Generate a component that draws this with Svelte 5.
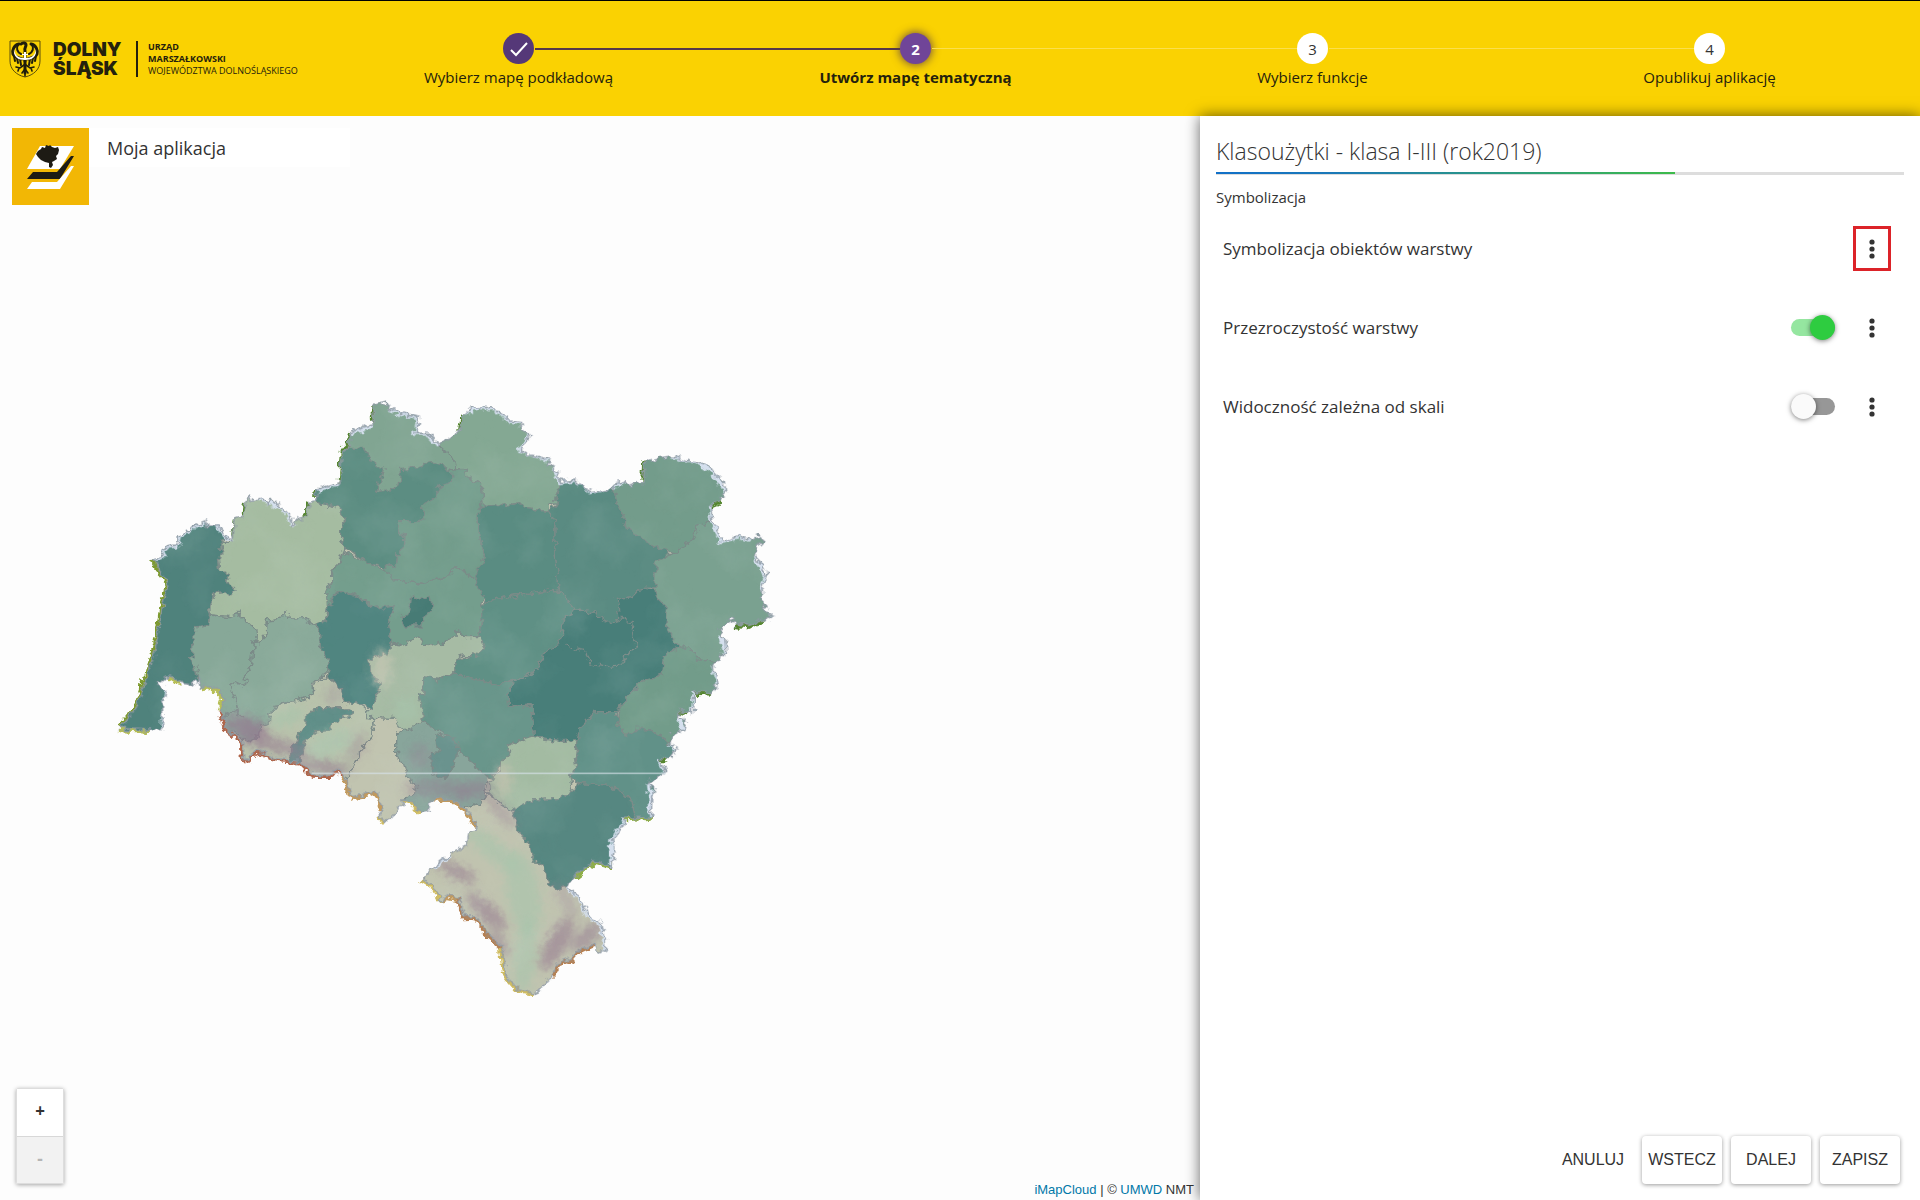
<script lang="ts">
    const steps = [
        { label: 'Wybierz mapę podkładową', state: 'done' },
        { label: 'Utwórz mapę tematyczną', state: 'active' },
        { label: 'Wybierz funkcje', state: 'todo' },
        { label: 'Opublikuj aplikację', state: 'todo' },
    ];

    let appName = $state('Moja aplikacja');
    let progress = $state(66.7);

    let options = $state([
        { id: 'symbols', label: 'Symbolizacja obiektów warstwy', toggle: false, on: false, marked: true },
        { id: 'opacity', label: 'Przezroczystość warstwy', toggle: true, on: true, marked: false },
        { id: 'scale', label: 'Widoczność zależna od skali', toggle: true, on: false, marked: false },
    ]);

    // granica województwa
    const border =
        'M60 1015L110 950 130 890 145 840 165 780 180 700 188 640 203 590 195 565 170 530 158 508 185 500 195 470 230 465 240 435 290 405 320 392 325 408 355 408 372 430 395 455 402 400 410 382 428 378 432 345 447 320 455 335 490 328 505 342 508 325 545 352 578 385 576 408 595 385 612 382 630 340 645 335 650 298 690 285 718 278 722 235 728 185 745 165 752 130 790 110 820 105 820 45 860 36 866 55 920 72 958 82 948 130 985 130 1012 155 1018 168 1040 148 1075 125 1080 110 1088 80 1115 52 1140 50 1198 60 1205 70 1225 92 1265 98 1268 120 1290 138 1278 155 1262 182 1290 195 1350 208 1345 225 1370 245 1382 275 1425 270 1445 290 1475 305 1535 295 1545 283 1575 275 1590 285 1630 280 1635 215 1680 203 1715 198 1765 212 1790 215 1830 232 1850 255 1870 275 1875 310 1858 335 1835 345 1838 395 1855 420 1865 455 1890 445 1915 437 1955 450 1975 435 1992 450 1975 465 1965 500 1985 520 2000 555 1985 590 1990 640 2003 670 2018 676 1990 690 1945 706 1905 702 1893 688 1860 715 1862 735 1875 745 1878 790 1850 812 1840 835 1855 883 1830 908 1785 905 1780 970 1740 962 1738 985 1758 995 1750 1020 1715 1035 1712 1060 1728 1080 1715 1100 1675 1105 1698 1145 1645 1180 1665 1195 1655 1220 1655 1280 1580 1285 1535 1355 1545 1370 1535 1430 1480 1415 1420 1460 1400 1492 1440 1520 1465 1580 1505 1600 1512 1630 1518 1675 1495 1688 1480 1662 1435 1682 1415 1705 1375 1720 1355 1760 1305 1810 1255 1800 1215 1755 1205 1670 1165 1635 1125 1580 1095 1582 1078 1525 1045 1518 1022 1532 1000 1488 968 1468 1000 1430 1050 1395 1100 1365 1108 1325 1132 1310 1110 1275 1070 1232 1000 1225 985 1258 960 1265 940 1240 912 1230 880 1275 855 1295 835 1278 848 1265 830 1205 755 1220 732 1155 710 1135 695 1155 640 1155 600 1115 520 1105 470 1080 432 1112 428 1055 375 1010 362 960 375 925 340 890 305 895 298 862 280 885 245 880 210 858 170 885 200 900 188 950 188 1018 150 1020Z';

    // powiaty; fragmenty poza granicą obcina clip-path
    const counties = [
        { fill: '#4f827c', d: 'M30 1040L100 480 320 370 395 440 360 460 368 490 358 500 362 540 380 548 385 580 410 607 345 610 330 650 325 705 290 710 275 770 275 800 298 862 290 900 230 1040Z' },
        { fill: '#a5bca1', d: 'M380 460L395 440 400 300 645 300 645 335 715 352 742 395 722 405 725 445 738 470 722 510 695 545 695 575 680 610 683 650 675 690 645 705 610 683 560 685 555 668 540 685 503 690 498 735 482 755 470 750 470 715 445 700 415 670 390 680 330 675 330 650 345 610 410 607 385 580 380 548 362 540 358 500 368 490 360 460Z' },
        { fill: '#87a898', d: 'M330 675L390 680 415 670 445 700 470 715 475 755 460 760 455 825 435 855 440 885 415 880 390 890 405 930 412 970 432 985 400 965 370 985 340 960 340 910 300 905 290 850 275 800 275 770 290 710 325 705Z' },
        { fill: '#8aaa9a', d: 'M482 755L498 735 503 690 540 685 555 668 560 685 610 683 645 705 662 730 665 775 688 820 680 850 635 880 642 915 600 930 535 940 510 970 505 1000 482 1010 475 1035 455 1052 428 1045 370 1010 370 985 400 965 432 985 412 970 405 930 390 890 415 880 440 885 435 855 455 825 460 760Z' },
        { fill: '#b9c3ac', d: 'M428 1045L455 1052 475 1035 482 1010 505 1000 510 970 535 940 600 930 642 915 640 885 680 860 715 885 735 940 770 935 800 960 800 982 820 985 815 1040 780 1080 755 1140 740 1170 400 1170Z' },
        { fill: '#5f8e88', d: 'M568 1130L572 1070 590 1060 600 1025 620 1000 612 985 640 960 680 955 700 950 728 950 760 965 755 982 730 980 695 1000 690 1022 650 1025 610 1060 612 1078 600 1125Z' },
        { fill: '#749e8d', d: 'M738 485L722 510 695 545 695 575 680 610 683 650 712 605 760 615 800 635 830 655 882 645 865 700 873 760 910 768 945 738 970 750 965 765 1000 768 1040 755 1070 725 1095 740 1140 740 1145 690 1150 600 1125 570 1095 545 1065 530 1040 560 970 580 880 568 848 535 800 520Z' },
        { fill: '#508580', d: 'M650 705L680 690 683 650 690 640 712 605 760 615 800 635 830 655 882 645 865 700 873 760 860 792 805 810 808 840 843 885 815 955 770 935 735 940 715 885 680 855 688 820 665 775 662 730Z' },
        { fill: '#a6bba4', d: 'M870 765L910 768 945 738 970 750 965 765 1000 768 1040 755 1070 725 1095 740 1140 740 1155 775 1125 800 1090 800 1065 810 1065 850 1020 868 975 865 972 910 955 915 970 970 970 1008 925 1020 895 1008 880 985 800 982 800 960 815 955 843 885 808 840 805 810 860 792Z' },
        { fill: '#477b75', d: 'M935 615L950 632 990 620 997 660 970 680 967 708 913 708 900 685 928 670Z' },
        { fill: '#81a592', d: 'M700 175L735 100 820 20 960 30 1018 168 1060 205 1068 240 985 240 905 260 900 290 860 305 832 305 790 200Z' },
        { fill: '#5c8d82', d: 'M640 300L690 260 710 175 790 175 810 205 825 210 828 230 852 232 832 305 860 300 900 285 905 235 965 228 985 215 1055 240 1055 278 1020 285 1005 325 965 345 972 375 960 395 900 395 895 410 912 440 910 475 895 485 890 520 860 530 800 520 738 470 722 445 722 405 742 395 715 352 645 335Z' },
        { fill: '#729c8b', d: 'M1055 240L1098 238 1100 260 1145 290 1150 345 1135 370 1135 430 1155 490 1125 570 1095 545 1065 530 1040 560 970 580 880 568 848 535 890 520 895 485 910 475 912 440 895 410 900 395 960 395 972 375 965 345 1005 325 1020 285 1055 278Z' },
        { fill: '#84a893', d: 'M1018 168L1060 60 1130 30 1400 150 1382 275 1365 330 1375 340 1350 345 1345 365 1272 355 1265 338 1220 345 1150 350 1145 290 1100 260 1098 238 1068 240 1060 205Z' },
        { fill: '#5a8c82', d: 'M1150 350L1220 345 1265 338 1272 355 1345 365 1365 395 1365 490 1378 600 1190 625 1160 638 1140 605 1125 570 1155 490 1135 430 1135 370Z' },
        { fill: '#5a8b82', d: 'M1382 275L1385 250 1535 280 1550 330 1570 385 1580 415 1650 455 1710 475 1705 495 1670 515 1668 590 1625 592 1600 620 1555 625 1560 690 1530 700 1470 665 1420 665 1378 600 1365 490 1365 395 1345 365 1375 340 1365 330Z' },
        { fill: '#739c8b', d: 'M1535 280L1620 180 1880 180 1890 340 1838 395 1800 405 1760 465 1725 490 1690 480 1650 460 1580 415 1570 385 1550 330Z' },
        { fill: '#7aa190', d: 'M1838 395L2050 400 2050 750 1880 820 1840 815 1790 805 1775 780 1715 770 1695 705 1695 650 1668 620 1668 515 1705 495 1725 490 1760 465 1800 405Z' },
        { fill: '#5f9085', d: 'M1160 638L1190 625 1378 600 1430 660 1400 690 1380 760 1340 800 1300 860 1240 870 1190 885 1065 850 1065 810 1125 800 1155 775 1140 740 1145 690 1145 640Z' },
        { fill: '#729c8a', d: 'M1840 815L1900 850 1800 1060 1712 1060 1650 1020 1610 1018 1580 1035 1550 1000 1555 965 1580 920 1630 870 1685 855 1690 800 1740 770 1775 780 1790 805Z' },
        { fill: '#487e79', d: 'M1430 660L1470 665 1530 700 1560 690 1552 625 1600 620 1625 592 1665 595 1670 625 1700 655 1695 700 1715 735 1740 770 1690 800 1685 855 1630 870 1580 920 1550 965 1490 965 1440 1015 1430 1055 1380 1055 1300 1040 1295 990 1300 945 1225 950 1225 915 1240 870 1300 850 1340 780 1380 760 1390 690Z' },
        { fill: '#69968b', d: 'M1020 868L1065 850 1190 885 1240 870 1225 915 1225 950 1300 945 1295 990 1300 1040 1225 1065 1230 1090 1205 1120 1180 1165 1160 1160 1130 1130 1070 1080 1040 1035 970 995 970 970 955 915 972 910 975 865Z' },
        { fill: '#a3bba2', d: 'M1225 1065L1300 1042 1380 1055 1428 1052 1425 1090 1430 1130 1410 1160 1420 1205 1380 1225 1300 1230 1240 1260 1215 1250 1170 1215 1165 1180 1205 1140 1205 1110 1235 1080Z' },
        { fill: '#619188', d: 'M1430 1055L1440 1015 1490 965 1550 965 1550 1000 1580 1035 1610 1018 1650 1020 1712 1060 1790 1100 1680 1310 1610 1310 1595 1225 1530 1190 1430 1180 1410 1160 1430 1130Z' },
        { fill: '#568781', d: 'M1420 1205L1430 1180 1530 1190 1595 1225 1610 1310 1560 1470 1400 1492 1370 1498 1350 1485 1330 1425 1300 1415 1290 1365 1255 1325 1235 1260 1300 1230 1380 1225Z' },
        { fill: '#88a59b', d: 'M890 1030L930 1015 970 995 1040 1035 1070 1080 1130 1130 1160 1160 1160 1210 1140 1240 1095 1252 1060 1300 900 1300 912 1230 955 1190 930 1175 910 1120 890 1100Z' },
        { fill: '#6a938e', d: 'M1010 1035L1065 1045 1075 1080 1065 1110 1045 1160 1020 1165 995 1145 992 1090 1015 1085Z' },
    ];

    const extraBorders = [
        'M800 982L820 985 815 1040 780 1080 755 1140',
        'M1400 762L1415 775 1450 780 1475 822 1515 830 1568 825 1575 795 1610 770 1595 740 1600 695 1560 690',
        'M1095 1252L1140 1240 1160 1210 1235 1260',
    ];

    // zachodni i południowy skraj widoczny spod warstwy
    const fringes = [
        { color: '#7d9a2e', d: 'M60 1015L110 950 130 890 145 840 165 780 180 700 188 640 203 590 195 565 170 530 158 508' },
        { color: '#b7bf55', d: 'M60 1015L150 1020M210 858L245 880M305 895L340 890 375 925 362 960' },
        { color: '#b0664a', d: 'M362 960L375 1010 428 1055 432 1112 470 1080 520 1105 600 1115 640 1155 695 1155 710 1135 732 1155' },
        { color: '#c39a5c', d: 'M732 1155L755 1220 830 1205 848 1265M1000 1225L1070 1232 1110 1275 1132 1310M1022 1532L1045 1518 1078 1525' },
        { color: '#d0bd62', d: 'M835 1278L855 1295M912 1230L940 1240 960 1265M968 1468L1000 1488 1022 1532M1205 1670L1215 1755 1255 1800 1305 1810' },
        { color: '#b58052', d: 'M1078 1525L1095 1582 1125 1580 1165 1635 1205 1670M1355 1760L1375 1720 1415 1705 1435 1682 1480 1662' },
        { color: '#55862f', d: 'M402 440L410 390M430 378L434 345M615 380L630 340M648 330L650 298M722 278L728 185 745 165 752 130M822 95L820 45M1080 120L1088 80M1633 280L1635 215M1858 335L1835 345M1990 690L1945 706 1905 702M1830 908L1785 905M1760 968L1740 962M1700 1105L1675 1105' },
        { color: '#8faf45', d: 'M1655 1280L1580 1285M1535 1430L1480 1415 1420 1460' },
    ];

    // pasma górskie
    const ridges = [
        { cx: 440, cy: 1010, rx: 70, ry: 30, r: 15, o: 0.7 },
        { cx: 520, cy: 1065, rx: 110, ry: 22, r: 12, o: 0.6 },
        { cx: 665, cy: 1130, rx: 90, ry: 20, r: 8, o: 0.6 },
        { cx: 770, cy: 1070, rx: 24, ry: 50, r: 25, o: 0.3 },
        { cx: 700, cy: 915, rx: 26, ry: 36, r: 0, o: 0.25 },
        { cx: 1010, cy: 1195, rx: 100, ry: 26, r: 0, o: 0.4 },
        { cx: 1120, cy: 1200, rx: 60, ry: 24, r: -20, o: 0.5 },
        { cx: 960, cy: 1100, rx: 30, ry: 40, r: 0, o: 0.3 },
        { cx: 1200, cy: 1260, rx: 70, ry: 20, r: 50, o: 0.4 },
        { cx: 1070, cy: 1445, rx: 65, ry: 20, r: 25, o: 0.6 },
        { cx: 1160, cy: 1565, rx: 80, ry: 24, r: 42, o: 0.6 },
        { cx: 1195, cy: 1660, rx: 50, ry: 22, r: 60, o: 0.45 },
        { cx: 1370, cy: 1660, rx: 90, ry: 30, r: 120, o: 0.6 },
        { cx: 1460, cy: 1640, rx: 60, ry: 24, r: -40, o: 0.55 },
        { cx: 1400, cy: 1530, rx: 60, ry: 20, r: 60, o: 0.3 },
    ];

    const valleys = [
        { cx: 1180, cy: 1380, rx: 100, ry: 30, r: 40 },
        { cx: 1270, cy: 1510, rx: 50, ry: 130, r: -10 },
        { cx: 1275, cy: 1700, rx: 34, ry: 110, r: 5 },
        { cx: 690, cy: 1060, rx: 70, ry: 34, r: -25 },
        { cx: 560, cy: 980, rx: 60, ry: 24, r: -20 },
        { cx: 920, cy: 960, rx: 40, ry: 40, r: 0 },
    ];
</script>

<div class="page">
    <header class="topbar">
        <a class="brand" href="#start" aria-label="Dolny Śląsk">
            <svg class="crest" viewBox="0 0 32 38" aria-hidden="true">
                <path d="M1 1h30v20c0 8-6 14-15 16C7 35 1 29 1 21z" fill="none" stroke="#5c4f0a" stroke-width="1" />
                <g fill="none" stroke="#1f1d0c" stroke-linecap="round">
                    <path d="M12 4c2-2 5-1 5 1s-2 3-1 6v10" stroke-width="3" />
                    <path d="M10 4c-5 1-7 6-6 10 1 3 5 4 9 5M22 4c5 1 7 6 6 10-1 3-5 4-9 5" stroke-width="3" />
                    <path d="M9 5c-2 3-1 7 3 9M23 5c2 3 1 7-3 9" stroke-width="2" />
                    <path d="M5 16l1 5M8 18l1 5M11 19l1 6M27 16l-1 5M24 18l-1 5M21 19l-1 6" stroke-width="2" />
                    <path d="M16 19v14" stroke-width="3" />
                    <path d="M15 25l-4 3-4-1M10 28l-1 3M17 25l4 3 4-1M22 28l1 3M16 29l-3 4M16 29l3 4M16 32v4" stroke-width="1.6" />
                </g>
                <path d="M5 9c1 8 6 9 10 9v-3h-2v-1h2v-2h2v2h2v1h-2v3c4 0 9-1 10-9 1 8-4 11-11 11S4 17 5 9z" fill="#fff" />
            </svg>
            <span class="brand-name">DOLNY<br />ŚLĄSK</span>
            <span class="brand-office">
                <b>URZĄD</b>
                <b>MARSZAŁKOWSKI</b>
                <span>WOJEWÓDZTWA DOLNOŚLĄSKIEGO</span>
            </span>
        </a>

        <ol class="steps">
            {#each steps as step, i}
                <li class="step {step.state}">
                    <span class="step-dot">
                        {#if step.state === 'done'}
                            <svg viewBox="0 0 20 20" width="20" height="20" aria-hidden="true">
                                <path d="M2 11l5 5L18 4" fill="none" stroke="#fff" stroke-width="2" />
                            </svg>
                        {:else}
                            {i + 1}
                        {/if}
                    </span>
                    <span class="step-label">{step.label}</span>
                </li>
            {/each}
        </ol>
    </header>

    <main class="workspace">
        <section class="map-pane" aria-label="Mapa">
            <svg class="map" viewBox="-300 -822 3600 3252" preserveAspectRatio="xMinYMin meet" aria-hidden="true">
                <defs>
                    <filter id="rough" x="-5%" y="-5%" width="110%" height="110%" color-interpolation-filters="sRGB">
                        <feTurbulence type="fractalNoise" baseFrequency="0.055" numOctaves="2" seed="4" />
                        <feDisplacementMap in="SourceGraphic" scale="28" xChannelSelector="R" yChannelSelector="G" />
                    </filter>
                    <filter id="soft" x="-50%" y="-50%" width="200%" height="200%">
                        <feGaussianBlur stdDeviation="14" />
                    </filter>
                    <filter id="relief" x="0" y="0" width="100%" height="100%" color-interpolation-filters="sRGB">
                        <feTurbulence type="fractalNoise" baseFrequency="0.006" numOctaves="3" seed="9" />
                        <feColorMatrix values="0 0 0 0 0.85  0 0 0 0 0.9  0 0 0 0 0.88  1.2 0 0 0 -0.5" />
                    </filter>
                    <clipPath id="region"><path d={border} /></clipPath>
                </defs>
                <g filter="url(#rough)">
                    {#each fringes as fringe}
                        <path d={fringe.d} fill="none" stroke={fringe.color} stroke-width="18" stroke-linejoin="round" />
                    {/each}
                    <path d={border} fill="#c1c4b0" />
                    <g clip-path="url(#region)">
                        {#each counties as county}
                            <path d={county.d} fill={county.fill} stroke="#7b8b88" stroke-width="4" />
                        {/each}
                        {#each extraBorders as line}
                            <path d={line} fill="none" stroke="#7b8b88" stroke-width="4" />
                        {/each}
                        <g filter="url(#soft)">
                            {#each valleys as v}
                                <ellipse cx={v.cx} cy={v.cy} rx={v.rx} ry={v.ry} transform="rotate({v.r} {v.cx} {v.cy})" fill="#a6c4ab" opacity="0.6" />
                            {/each}
                            {#each ridges as m}
                                <ellipse cx={m.cx} cy={m.cy} rx={m.rx} ry={m.ry} transform="rotate({m.r} {m.cx} {m.cy})" fill="#94788f" opacity={m.o} />
                            {/each}
                            <ellipse cx="845" cy="835" rx="28" ry="60" fill="#cfcab8" opacity="0.6" />
                            <ellipse cx="1210" cy="1170" rx="24" ry="50" fill="#cbc3b0" opacity="0.6" />
                        </g>
                        <rect x="40" y="20" width="2000" height="1810" filter="url(#relief)" opacity="0.22" />
                        <!-- jasny pas od strony północno-wschodniej -->
                        <path class="shine" d="M158 508L185 500 195 470 230 465 240 435 290 405 320 392 355 408 395 455M447 320L505 335 545 352 578 385 576 408M650 298L718 278M752 130L820 105M866 55L958 82 948 130 985 130 1018 168M1088 70L1140 50 1198 60 1225 92 1265 98 1290 138 1262 182 1350 208 1382 275 1425 270 1475 305 1575 275M1715 198L1790 215 1850 255 1875 310M1835 345L1838 395 1865 455 1890 445 1915 437 1955 450M1965 500L2000 555 1985 590 2018 676M1862 735L1878 790M1840 835L1855 883M1785 905L1780 970M1738 985L1750 1020M1712 1060L1728 1080M1675 1105L1698 1145M1645 1180L1655 1280M1580 1285L1535 1355 1535 1430M1400 1492L1440 1520 1465 1580 1505 1600 1518 1675M1000 1430L1050 1395M200 900L188 1018" />
                    </g>
                    <path d={border} fill="none" stroke="#8f9aa6" stroke-width="4" />
                </g>
                <path d="M635 1150H1698" stroke="#d7e3ea" stroke-width="3" />
            </svg>

            <div class="app-title">
                <svg class="app-icon" viewBox="0 0 77 77" aria-hidden="true">
                    <rect width="77" height="77" fill="#f2b705" />
                    <path d="M28 18h34L48 41H15z" fill="#fff" />
                    <path d="M26 23l3-2 1-2 3 1 1-3 3 1 1-1 2 2 3 1 3-1 1 3-1 4-2 2 1 3-3 2-2 1 1 3-2 3-2-1v-4l-4-1-4-2-3-3-2-3z" fill="#1d1b14" />
                    <path d="M21 44h24l14-16h3L48 51H15z" fill="#1d1b14" />
                    <path d="M20 54h25l14-16h3L48 61H15z" fill="#fff" />
                </svg>
                <input class="app-name" type="text" aria-label="Nazwa aplikacji" bind:value={appName} />
            </div>

            <div class="map-footer">
                <div class="zoom">
                    <button type="button" aria-label="Przybliż">+</button>
                    <button type="button" aria-label="Oddal" disabled>-</button>
                </div>
                <p class="attribution"><a href="#imapcloud">iMapCloud</a> | © <a href="#umwd">UMWD</a> NMT</p>
            </div>
        </section>

        <section class="panel">
            <h1>Klasoużytki - klasa I-III (rok2019)</h1>
            <div class="progress"><div class="progress-fill" style="width: {progress}%"></div></div>
            <h2>Symbolizacja</h2>

            <ul class="options">
                {#each options as option}
                    <li class="option">
                        {#if option.toggle}
                            <label for={option.id}>{option.label}</label>
                            <input class="switch" type="checkbox" id={option.id} bind:checked={option.on} />
                        {:else}
                            <span class="option-label">{option.label}</span>
                        {/if}
                        <button type="button" class="more" class:marked={option.marked} aria-label="Więcej: {option.label}">
                            <svg viewBox="0 0 6 20" width="6" height="20" aria-hidden="true">
                                <circle cx="3" cy="3" r="2.6" />
                                <circle cx="3" cy="10" r="2.6" />
                                <circle cx="3" cy="17" r="2.6" />
                            </svg>
                        </button>
                    </li>
                {/each}
            </ul>

            <footer class="actions">
                <button type="button" class="flat">ANULUJ</button>
                <button type="button">WSTECZ</button>
                <button type="button">DALEJ</button>
                <button type="button">ZAPISZ</button>
            </footer>
        </section>
    </main>
</div>

<style>
    :global(body) { background: #fff; }
    .page {
        min-height: 100vh;
        display: flex;
        flex-direction: column;
        box-sizing: border-box;
        border-top: 1px solid #000;
        font-family: "Open Sans", "Noto Sans", sans-serif;
        color: #333;
    }
    .topbar {
        height: 115px;
        display: flex;
        align-items: center;
        background: #fad202;
        padding-right: 12px;
    }
    .brand {
        flex: 0 0 311px;
        display: flex;
        align-items: center;
        padding-left: 9px;
        color: #24210d;
        text-decoration: none;
    }
    .crest { width: 32px; height: 38px; }
    .brand-name {
        margin-left: 12px;
        font: 900 19px/19px Inter, sans-serif;
        width: 70px;
    }
    .brand-office {
        display: flex;
        flex-direction: column;
        margin-left: 13px;
        padding-left: 10px;
        border-left: 2px solid #24210d;
        font-size: 9px;
        line-height: 12px;
        white-space: nowrap;
    }
    .steps {
        flex: 1;
        display: flex;
        align-self: flex-start;
        list-style: none;
        margin: 0;
        padding: 32px 0 0;
    }
    .step {
        flex: 1;
        display: flex;
        flex-direction: column;
        align-items: center;
        position: relative;
        font-size: 15px;
        line-height: 24px;
        color: #24210d;
    }
    /* łącznik do następnego kroku */
    .step:not(:last-child)::after {
        content: '';
        position: absolute;
        top: 15px;
        left: calc(50% + 16px);
        width: calc(100% - 32px);
        height: 1px;
        background: #fbdf4d;
    }
    .step.done:not(:last-child)::after { height: 2px; background: #563848; }
    .step-dot {
        width: 31px;
        height: 31px;
        border-radius: 50%;
        display: flex;
        align-items: center;
        justify-content: center;
        background: #fff;
        color: #333;
        margin-bottom: 1px;
    }
    .done .step-dot { background: #553878; }
    .active .step-dot {
        background: #704598;
        color: #fff;
        box-shadow: 0 0 8px 1px rgba(85, 56, 72, 0.8);
    }
    .active { font-weight: 700; }

    .workspace {
        flex: 1;
        display: grid;
        grid-template-columns: minmax(0, 1fr) 37.5%;
    }
    .map-pane {
        position: relative;
        display: flex;
        flex-direction: column;
        justify-content: space-between;
        background: #fdfdfd;
    }
    .map { position: absolute; inset: 0; width: 100%; height: 100%; }
    .shine { fill: none; stroke: #d5e0ee; stroke-width: 15; }
    .app-title {
        position: relative;
        display: flex;
        align-items: flex-start;
        padding: 12px;
    }
    .app-icon { width: 77px; height: 77px; }
    .app-name {
        width: 261px;
        height: 39px;
        box-sizing: border-box;
        border: 0;
        padding: 0 18px;
        background: #fff;
        color: #333;
        font: 18px/24px "Open Sans", "Noto Sans", sans-serif;
    }
    .map-footer {
        position: relative;
        display: flex;
        justify-content: space-between;
        align-items: flex-end;
        padding-left: 16px;
    }
    .zoom {
        display: flex;
        flex-direction: column;
        margin-bottom: 16px;
        border: 1px solid #ddd;
        border-radius: 2px;
        box-shadow: 0 1px 4px rgba(0, 0, 0, 0.35);
    }
    .zoom button {
        width: 46px;
        height: 47px;
        padding: 0 0 3px;
        border: 0;
        background: #fff;
        color: #333;
        font: 700 17px/24px "Open Sans", sans-serif;
    }
    .zoom button:disabled {
        background: #f2f2f2;
        color: #b5b5b5;
        border-top: 1px solid #d8d8d8;
    }
    .attribution {
        margin: 0;
        padding: 0 6px 2px 0;
        font: 13px/16px "Liberation Sans", Arial, sans-serif;
    }
    .attribution a { color: #0078a8; text-decoration: none; }

    .panel {
        position: relative;
        display: flex;
        flex-direction: column;
        padding: 19px 16px 16px;
        background: #fff;
        box-shadow: 0 0 14px rgba(0, 0, 0, 0.6);
        clip-path: inset(-20px 0 0 -20px);
    }
    h1 {
        margin: 0;
        font-size: 23px;
        line-height: 32px;
        font-weight: 300;
    }
    .progress {
        height: 3px;
        margin-top: 5px;
        background: #ddd;
    }
    .progress-fill {
        height: 2px;
        background: linear-gradient(90deg, #1170c8, #1a78b8 25%, #3dbb4a);
    }
    h2 {
        margin: 10px 0 0;
        font-size: 15px;
        line-height: 24px;
        font-weight: 400;
    }
    .options {
        list-style: none;
        margin: 0;
        padding: 0 13px 0 7px;
    }
    .option {
        display: flex;
        align-items: center;
        height: 79px;
        font-size: 17px;
        line-height: 24px;
    }
    .option label, .option-label { flex: 1; }
    .switch {
        appearance: none;
        position: relative;
        width: 44px;
        height: 17px;
        margin: 0 18px;
        border-radius: 9px;
        background: #979797;
    }
    .switch::before {
        content: '';
        position: absolute;
        top: -4px;
        left: 0;
        width: 25px;
        height: 25px;
        border-radius: 50%;
        background: #fafafa;
        box-shadow: 0 1px 5px rgba(0, 0, 0, 0.5);
    }
    .switch:checked { background: #95e6a0; }
    .switch:checked::before { left: 19px; background: #2ecc40; }
    .more {
        display: flex;
        align-items: center;
        justify-content: center;
        width: 38px;
        height: 45px;
        padding: 0;
        border: 3px solid transparent;
        background: none;
        fill: #333;
    }
    .more.marked { border-color: #dc2329; }
    .actions {
        display: flex;
        justify-content: flex-end;
        gap: 9px;
        margin-top: auto;
        padding-right: 4px;
    }
    .actions button {
        width: 80px;
        height: 48px;
        padding: 0;
        border: 0;
        border-radius: 4px;
        background: #fff;
        box-shadow: 0 1px 4px rgba(0, 0, 0, 0.4);
        color: #333;
        font: 16px/24px "Liberation Sans", Arial, sans-serif;
    }
    .actions .flat { box-shadow: none; }
</style>
